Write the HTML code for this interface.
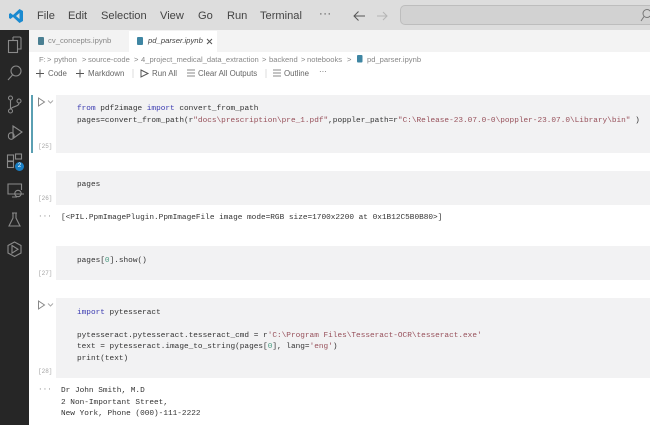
<!DOCTYPE html>
<html><head><meta charset="utf-8">
<style>
html,body{margin:0;padding:0;background:#fff}
body{width:650px;height:425px;overflow:hidden;position:relative;font-family:"Liberation Sans",sans-serif}
#w{position:absolute;left:0;top:0;width:650px;height:425px;overflow:hidden;filter:blur(.35px)}
.a{position:absolute;white-space:pre}
.m{font-family:"Liberation Mono",monospace;font-size:7.76px;line-height:11.5px;color:#333}
.menu{font-size:11.1px;color:#444;top:9px;line-height:14px}
.tb{font-size:7.9px;color:#666;top:68px;line-height:11px}
.bc{font-size:7.6px;color:#888;top:54px;line-height:11px}
.cell{position:absolute;left:56px;width:594px;background:#f2f2f3}
.n{font-family:"Liberation Mono",monospace;font-size:6px;color:#a5a5a5;left:38px;line-height:8px}
.k{color:#3a3ab0}.s{color:#97505a}.g{color:#4a9a80}
svg{position:absolute;overflow:visible}
</style></head><body><div id="w">

<div class="a" style="left:0;top:0;width:650px;height:30px;background:#dddddd"></div>
<div class="a" style="left:0;top:30px;width:29px;height:395px;background:#262626"></div>
<div class="a" style="left:29px;top:30px;width:621px;height:22px;background:#f3f3f3"></div>
<div class="a" style="left:129px;top:31px;width:88px;height:21px;background:#fff"></div>

<svg style="left:8px;top:8px" width="16" height="16" viewBox="0 0 16 16">
<path d="M11.5 1L15 3v10l-3.5 2L5 9l-2.6 2L1 10V6l1.4-1L5 7z" fill="#1b8ad0"/>
<path d="M11.5 5L8 8l3.5 3z" fill="#dddddd"/>
</svg>

<div class="a menu" style="left:37px">File</div>
<div class="a menu" style="left:68px">Edit</div>
<div class="a menu" style="left:101px">Selection</div>
<div class="a menu" style="left:160px">View</div>
<div class="a menu" style="left:198px">Go</div>
<div class="a menu" style="left:227px">Run</div>
<div class="a menu" style="left:260px">Terminal</div>
<div class="a menu" style="left:319px;top:7px;letter-spacing:0.5px">···</div>

<svg style="left:353px;top:10px" width="40" height="12" fill="none">
<path d="M12 6H1M5.500 1.500L1 6l4.500 4.500" stroke="#555" stroke-width="1"/>
<path d="M24 6h10M30 2l4 4-4 4" stroke="#b5b5b5" stroke-width="1"/>
</svg>
<div class="a" style="left:400px;top:5px;width:260px;height:20px;background:#d2d2d2;border:1px solid #bdbdbd;border-radius:5px;box-sizing:border-box"></div>
<svg style="left:640px;top:8px" width="12" height="14" fill="none" stroke="#777"><circle cx="7" cy="5.500" r="4"/><path d="M4 8.500L1 13"/></svg>

<!-- activity icons -->
<svg style="left:0;top:30px" width="29" height="395" fill="none" stroke="#8a8a8a" stroke-width="1.100">
<path d="M13 7h7l1 1v11h-3M13 7v3"/><rect x="8.500" y="10.500" width="9" height="12"/>
<circle cx="16" cy="41" r="5"/><path d="M12.500 45L8 50"/>
<circle cx="10.500" cy="68" r="2"/><circle cx="10.500" cy="81" r="2"/><circle cx="19" cy="71" r="2"/><path d="M10.500 70v9M19 73c0 4-7 3-8 6"/>
<path d="M13 96l9 6-9 6.500zM8.500 106a2.800 2.800 0 1 0 5.500 0a2.800 2.800 0 1 0-5.500 0"/>
<rect x="7.500" y="125" width="6" height="6"/><rect x="7.500" y="131.500" width="6" height="6"/><rect x="15.500" y="124" width="6" height="5"/>
<path d="M24 164H8v-10h13.500v6M12 167h5"/><circle cx="18" cy="163.500" r="3.200"/>
<path d="M12 183h5M13 183v5l-4 8h11l-4-8v-5"/>
<path d="M14.500 212l6.500 3.500v7.500l-6.500 3.500-6.500-3.500v-7.500zM12 215.500l6 3.800-6 3.800z"/>
</svg>
<div class="a" style="left:15px;top:162px;width:9px;height:9px;border-radius:50%;background:#1a7fc4;color:#fff;font-size:6px;line-height:9px;text-align:center">2</div>

<!-- tabs -->
<svg style="left:37px;top:36px" width="200" height="10"><rect x="1" y="1" width="6" height="8" rx="1" fill="#4a7f92"/><rect x="100" y="1" width="6" height="8" rx="1" fill="#3f86a3"/></svg>
<div class="a" style="left:48px;top:35px;font-size:7.7px;line-height:12px;color:#888">cv_concepts.ipynb</div>
<div class="a" style="left:148px;top:35px;font-size:7.7px;line-height:12px;color:#444;font-style:italic">pd_parser.ipynb</div>
<svg style="left:206px;top:38px" width="8" height="8" stroke="#555" fill="none"><path d="M1 1l5 5M6 1L1 6"/></svg>

<!-- breadcrumb -->
<div class="a bc" style="left:39px">F:</div>
<div class="a bc" style="left:47px">&gt;</div>
<div class="a bc" style="left:54px">python</div>
<div class="a bc" style="left:82px">&gt;</div>
<div class="a bc" style="left:88px">source-code</div>
<div class="a bc" style="left:134px">&gt;</div>
<div class="a bc" style="left:141px">4_project_medical_data_extraction</div>
<div class="a bc" style="left:262px">&gt;</div>
<div class="a bc" style="left:269px">backend</div>
<div class="a bc" style="left:301px">&gt;</div>
<div class="a bc" style="left:307px">notebooks</div>
<div class="a bc" style="left:347px">&gt;</div>
<svg style="left:356px;top:55px" width="8" height="9"><rect x="1" y="0" width="5.500" height="7.500" rx="1" fill="#3f86a3"/></svg>
<div class="a bc" style="left:367px">pd_parser.ipynb</div>

<!-- toolbar -->
<svg style="left:35px;top:68px" width="300" height="11" fill="none" stroke="#555">
<path d="M1 5.500h8M5 1.500v8M41 5.500h8M45 1.500v8"/>
<path d="M106 2l7 3.500-7 3.500z"/>
<path d="M152 2h8M152 5h8M152 8h8" stroke="#888" stroke-width="1.100"/>
<path d="M238 2h8M238 5h8M238 8h8" stroke="#888" stroke-width="1.100"/>
<path d="M98 1v9M231 1v9" stroke="#ddd"/>
</svg>
<div class="a tb" style="left:48px">Code</div>
<div class="a tb" style="left:88px">Markdown</div>
<div class="a tb" style="left:152px">Run All</div>
<div class="a tb" style="left:198px">Clear All Outputs</div>
<div class="a tb" style="left:284px">Outline</div>
<div class="a tb" style="left:319px;top:66px">···</div>

<!-- cells -->
<div class="a" style="left:31px;top:95px;width:2px;height:58px;background:#5a9fb2"></div>
<div class="cell" style="top:95px;height:58px"></div>
<div class="cell" style="top:171px;height:34px"></div>
<div class="cell" style="top:246px;height:34px"></div>
<div class="cell" style="top:298px;height:80px"></div>

<svg style="left:37px;top:97px" width="20" height="10" fill="none" stroke="#888"><path d="M1.500 1l6 4-6 4z"/><path d="M11 3.500l2.500 2.500 2.500-2.500" stroke="#aaa"/></svg>
<svg style="left:37px;top:300px" width="20" height="10" fill="none" stroke="#888"><path d="M1.500 1l6 4-6 4z"/><path d="M11 3.500l2.500 2.500 2.500-2.500" stroke="#aaa"/></svg>

<div class="a n" style="top:143px">[25]</div>
<div class="a n" style="top:195px">[26]</div>
<div class="a n" style="top:270px">[27]</div>
<div class="a n" style="top:368px">[28]</div>

<div class="a m" style="left:77px;top:104px"><span class="k">from</span> pdf2image <span class="k">import</span> convert_from_path</div>
<div class="a m" style="left:77px;top:116px">pages=convert_from_path(r<span class="s">"docs\prescription\pre_1.pdf"</span>,poppler_path=r<span class="s">"C:\Release-23.07.0-0\poppler-23.07.0\Library\bin"</span> )</div>
<div class="a m" style="left:77px;top:180px">pages</div>
<div class="a m" style="left:38px;top:212px;color:#888">···</div>
<div class="a m" style="left:61px;top:213px">[&lt;PIL.PpmImagePlugin.PpmImageFile image mode=RGB size=1700x2200 at 0x1B12C5B0B80&gt;]</div>
<div class="a m" style="left:77px;top:256px">pages[<span class="g">0</span>].show()</div>

<div class="a m" style="left:77px;top:308px"><span class="k">import</span> pytesseract</div>
<div class="a m" style="left:77px;top:331px">pytesseract.pytesseract.tesseract_cmd = r<span class="s">'C:\Program Files\Tesseract-OCR\tesseract.exe'</span></div>
<div class="a m" style="left:77px;top:342px">text = pytesseract.image_to_string(pages[<span class="g">0</span>], lang=<span class="s">'eng'</span>)</div>
<div class="a m" style="left:77px;top:354px">print(text)</div>

<div class="a m" style="left:38px;top:385px;color:#888">···</div>
<div class="a m" style="left:61px;top:386px">Dr John Smith, M.D</div>
<div class="a m" style="left:61px;top:398px">2 Non-Important Street,</div>
<div class="a m" style="left:61px;top:409px">New York, Phone (000)-111-2222</div>

</div></body></html>
